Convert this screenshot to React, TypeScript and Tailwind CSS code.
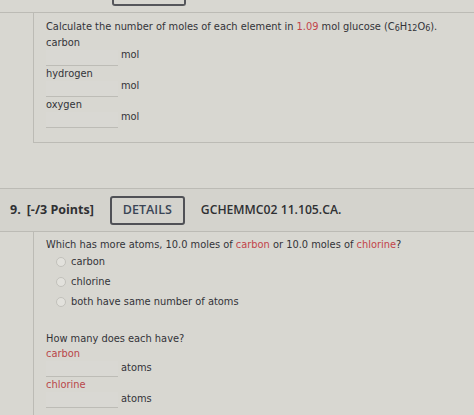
import type { ReactNode } from 'react'

const body = "font-['DejaVu_Sans',Verdana,sans-serif] text-[9.85px] text-[#333338]"

function AnswerRow({ label, unit, red = false }: { label: string; unit: string; red?: boolean }) {
  return (
    <div>
      <div className={`h-[15px] leading-[15px] ${red ? 'text-[#b8464a]' : ''}`}>{label}</div>
      <div className="flex h-[16px] items-center">
        <div className="h-[16px] w-[72px] border-b border-[#bdbcb6] bg-[#d9d8d3]" />
        <span className={`ml-[3px] ${red ? '-mt-[2px]' : '-mt-[5px]'}`}>{unit}</span>
      </div>
    </div>
  )
}

function Radio({ children }: { children: ReactNode }) {
  return (
    <div className="flex h-[20px] items-center pl-[10px]">
      <span className="h-[10px] w-[10px] rounded-full border border-[#c2c1bb] bg-[#e2e1dc]" />
      <span className="ml-[5px]">{children}</span>
    </div>
  )
}

export default function App() {
  return (
    <div className={`h-[415px] w-[474px] overflow-hidden bg-[#d8d7d1] ${body}`}>
      <div className="h-[13px] border-b border-[#bcbbb5]">
        <div className="ml-[112px] h-[6px] w-[74px] rounded-b-[3px] border-2 border-t-0 border-[#55565b]" />
      </div>

      <div className="ml-[33px] h-[130px] border-b border-l border-[#bcbbb5] pl-[12px] pt-[5px]">
        <div className="h-[17px] leading-[17px]">
          Calculate the number of moles of each element in <span className="text-[#c2434a]">1.09</span> mol glucose (C
          <sub className="relative top-[1px] text-[8px]">6</sub>H<sub className="relative top-[1px] text-[8px]">12</sub>O
          <sub className="relative top-[1px] text-[8px]">6</sub>).
        </div>
        <AnswerRow label="carbon" unit="mol" />
        <AnswerRow label="hydrogen" unit="mol" />
        <AnswerRow label="oxygen" unit="mol" />
      </div>

      <div className="h-[45px]" />

      <div className="flex h-[44px] items-center border-y border-[#bcbbb5] bg-[#d4d3cd] font-['Open_Sans',sans-serif] text-[#2f3033]">
        <span className="ml-[10px] text-[12.5px] font-bold">9.</span>
        <span className="ml-[6px] text-[12.5px] font-bold">[-/3 Points]</span>
        <div className="ml-[16px] flex h-[29px] w-[75px] items-center justify-center rounded-[3px] border-2 border-[#505156] text-[12.5px] font-semibold text-[#3a4556]">
          DETAILS
        </div>
        <span className="ml-[16px] text-[12.2px] font-semibold">GCHEMMC02 11.105.CA.</span>
      </div>

      <div className="ml-[33px] h-[200px] border-l border-[#bcbbb5] pl-[12px] pt-[5px]">
        <div className="h-[15px] leading-[15px]">
          Which has more atoms, 10.0 moles of <span className="text-[#c2434a]">carbon</span> or 10.0 moles of{' '}
          <span className="text-[#c2434a]">chlorine</span>?
        </div>
        <Radio>carbon</Radio>
        <Radio>chlorine</Radio>
        <Radio>both have same number of atoms</Radio>
        <div className="h-[19px]" />
        <div className="h-[15px] leading-[15px]">How many does each have?</div>
        <AnswerRow label="carbon" unit="atoms" red />
        <AnswerRow label="chlorine" unit="atoms" red />
      </div>
    </div>
  )
}
